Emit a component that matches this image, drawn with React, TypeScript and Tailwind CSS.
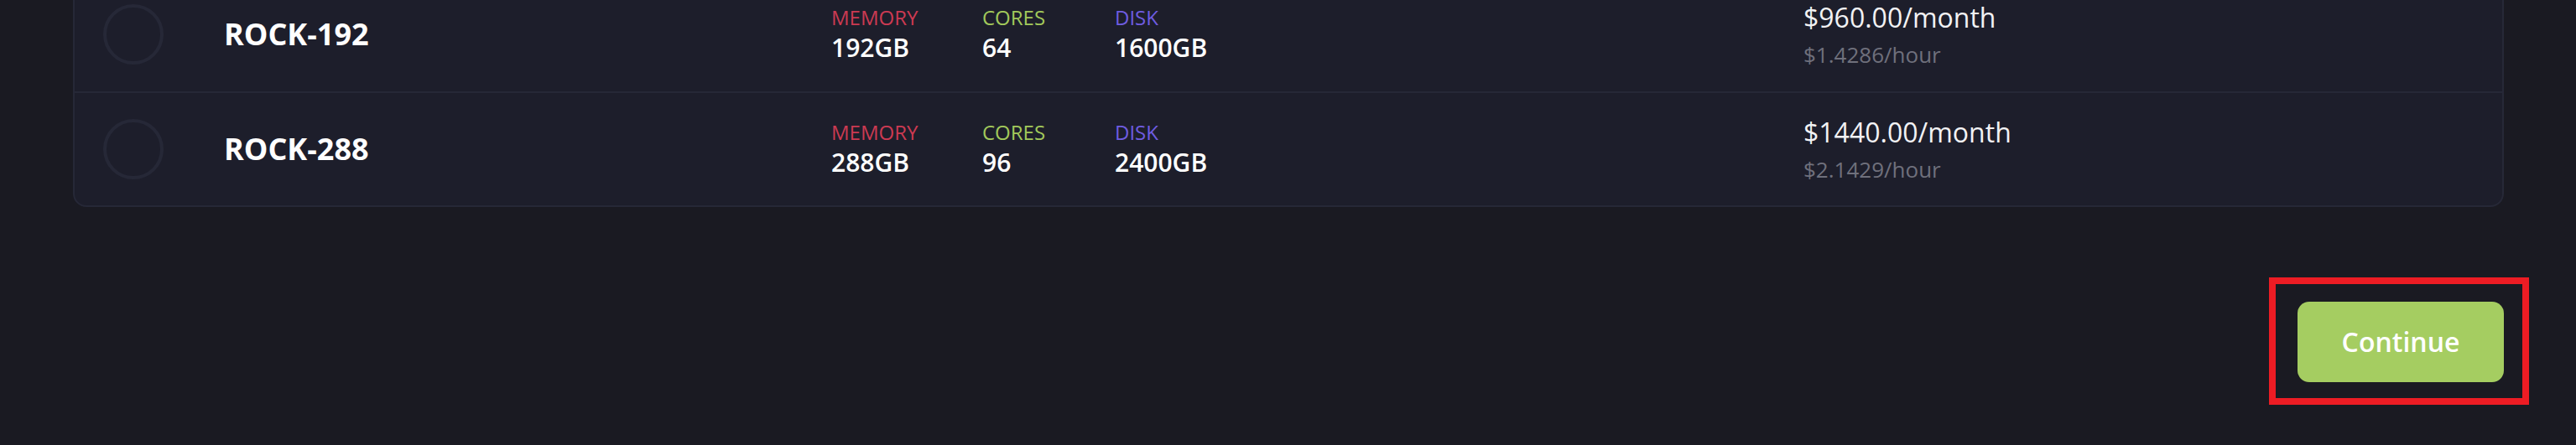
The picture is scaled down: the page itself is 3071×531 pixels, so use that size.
import React from "react";

type Plan = {
  name: string;
  memory: string;
  cores: string;
  disk: string;
  month: string;
  hour: string;
};

const plans: Plan[] = [
  { name: "ROCK-192", memory: "192GB", cores: "64", disk: "1600GB", month: "$960.00/month", hour: "$1.4286/hour" },
  { name: "ROCK-288", memory: "288GB", cores: "96", disk: "2400GB", month: "$1440.00/month", hour: "$2.1429/hour" },
];

function Row({ plan, first }: { plan: Plan; first: boolean }) {
  return (
    <div className={`flex h-[136px] items-center pl-[34px] ${first ? "" : "border-t-2 border-[#262837]"}`}>
      <div className="h-[72px] w-[72px] shrink-0 rounded-full border-[4px] border-[#262837]" />
      <div className="ml-[72px] w-[724px] shrink-0 text-[36px] font-bold leading-[44px] text-white">{plan.name}</div>
      <div className="flex w-[1159px] shrink-0">
        <div className="flex w-[180px] flex-col">
          <span className="text-[24px] font-normal leading-[32px] text-[#cc3a52]">MEMORY</span>
          <span className="text-[30px] font-semibold leading-[40px] text-white">{plan.memory}</span>
        </div>
        <div className="flex w-[158px] flex-col">
          <span className="text-[24px] font-normal leading-[32px] text-[#a2c95b]">CORES</span>
          <span className="text-[30px] font-semibold leading-[40px] text-white">{plan.cores}</span>
        </div>
        <div className="flex flex-col">
          <span className="text-[24px] font-normal leading-[32px] text-[#6e5ce0]">DISK</span>
          <span className="text-[30px] font-semibold leading-[40px] text-white">{plan.disk}</span>
        </div>
      </div>
      <div className="flex flex-col gap-[8px]">
        <span className="text-[32px] leading-[40px] text-[#f2f2f4]">{plan.month}</span>
        <span className="text-[26px] leading-[32px] text-[#6f707c]">{plan.hour}</span>
      </div>
    </div>
  );
}

export default function App() {
  return (
    <div className="h-[531px] overflow-hidden bg-[#1a1a22] pl-[87px] pr-[86px] font-['Open_Sans',sans-serif]">
      <div className="-mt-[29px] rounded-b-[16px] border-2 border-[#262837] bg-[#1d1e2b]">
        {plans.map((p, i) => (
          <Row key={p.name} plan={p} first={i === 0} />
        ))}
      </div>
      <div className="mt-[113px] flex justify-end">
        <div className="relative">
          <button className="flex h-[96px] w-[246px] items-center justify-center rounded-[14px] bg-[#a5cd61] text-[32px] font-semibold text-white">
            Continue
          </button>
          <div className="pointer-events-none absolute -bottom-[27px] -left-[34px] -right-[30px] -top-[29px] border-[8px] border-[#ed1c24]" />
        </div>
      </div>
    </div>
  );
}
